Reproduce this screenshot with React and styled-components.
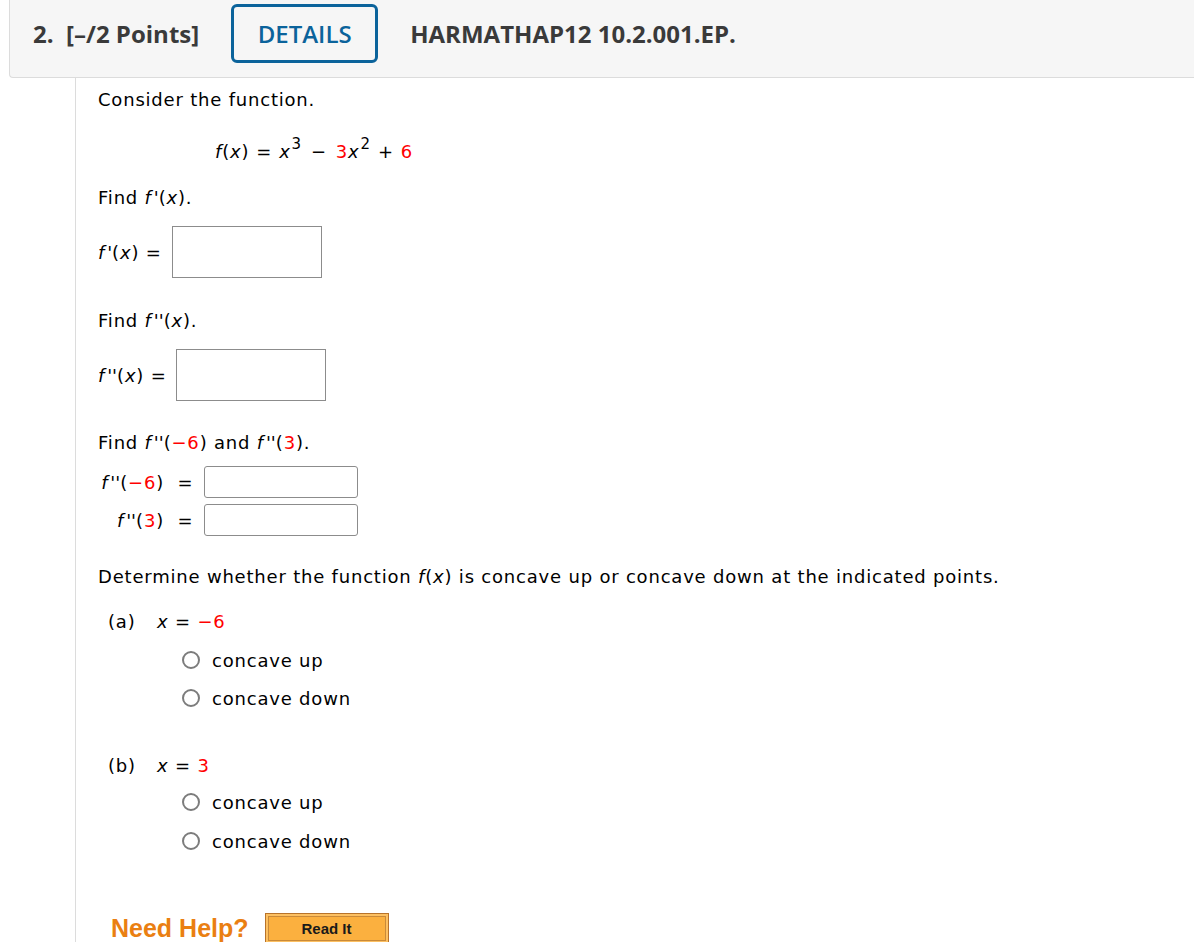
import styled, { createGlobalStyle } from 'styled-components';

/* ============ GLOBAL ============ */

const Global = createGlobalStyle`
  html, body {
    margin: 0;
    padding: 0;
    background: #ffffff;
  }
  body {
    font-family: "DejaVu Sans", Verdana, sans-serif;
    color: #000;
  }
`;

const BODY_FONT = `"DejaVu Sans", "Bitstream Vera Sans", Verdana, sans-serif`;

/* ============ STYLED ============ */

const Page = styled.div`
  padding-left: 9px;
  width: 1194px;
  height: 942px;
  box-sizing: border-box;
  overflow: hidden;
`;

const Header = styled.div`
  height: 78px;
  box-sizing: border-box;
  padding: 5px 0 15px 23px;
  display: flex;
  align-items: center;
  background: #f6f6f6;
  border-left: 1px solid #dcdcdc;
  border-bottom: 1px solid #dcdcdc;
  border-bottom-left-radius: 4px;
`;

const HeadText = styled.div`
  font-family: "Open Sans", "Liberation Sans", sans-serif;
  font-weight: 700;
  font-size: 24px;
  letter-spacing: 0;
  color: #3a3a3a;
  margin-left: ${({ $gap }) => $gap || 0}px;
  white-space: pre;
`;

const DetailsButton = styled.button`
  margin-left: 32px;
  width: 147px;
  height: 59px;
  box-sizing: border-box;
  border: 3px solid #0b639b;
  border-radius: 6px;
  background: transparent;
  color: #0b639b;
  font-family: "Open Sans", "Liberation Sans", sans-serif;
  font-weight: 600;
  font-size: 24px;
  padding: 0;
`;

const Content = styled.div`
  margin-left: 66px;
  border-left: 1px solid #dcdcdc;
  padding-left: 22px;
  padding-top: 10px;
  height: 900px;
  font-family: ${BODY_FONT};
  letter-spacing: 0.8px;
`;

const Line = styled.div`
  font-size: 18px;
  line-height: 24px;
  height: 24px;
  margin-top: ${({ $top }) => $top || 0}px;
  margin-left: ${({ $indent }) => $indent || 0}px;
  white-space: pre;
  display: flex;
  align-items: center;
`;

const I = styled.i`
  font-style: italic;
`;

const Prime = styled.i`
  font-style: italic;
  margin-left: 2px;
  letter-spacing: 0;
`;

const Red = styled.span`
  color: #ff0000;
`;

const Sup = styled.span`
  font-size: 15px;
  line-height: 0;
  position: relative;
  top: -8px;
  margin-left: 1px;
`;

const Op = styled.span`
  margin: 0 ${({ $m }) => ($m === undefined ? 7 : $m)}px;
`;

const AnswerRow = styled.div`
  display: flex;
  align-items: center;
  margin-top: ${({ $top }) => $top}px;
  font-size: 18px;
  white-space: pre;
`;

const BigInput = styled.input`
  width: 150px;
  height: 52px;
  box-sizing: border-box;
  border: 1px solid #8c8c8c;
  margin-left: ${({ $gap }) => $gap}px;
  background: #fff;
`;

const SmallGrid = styled.div`
  display: grid;
  grid-template-columns: 66px 40px 154px;
  grid-auto-rows: 32px;
  row-gap: 6px;
  align-items: center;
  margin-top: 11px;
  font-size: 18px;
  white-space: pre;
`;

const GridLabel = styled.div`
  justify-self: end;
`;

const GridEq = styled.div`
  text-align: center;
  padding-left: 3px;
`;

const SmallInput = styled.input`
  width: 154px;
  height: 32px;
  box-sizing: border-box;
  border: 1px solid #8c8c8c;
  border-radius: 3px;
  background: #fff;
`;

const PartLabel = styled.span`
  display: inline-block;
  width: 49px;
`;

const RadioRow = styled.label`
  display: flex;
  align-items: center;
  height: 24px;
  margin-top: ${({ $top }) => $top}px;
  margin-left: 84px;
  font-size: 18px;
`;

const RadioDot = styled.span`
  width: 18px;
  height: 18px;
  box-sizing: border-box;
  border: 2px solid #7c7c7c;
  border-radius: 50%;
  margin-right: 12px;
  background: #fff;
`;

const HelpRow = styled.div`
  display: flex;
  align-items: center;
  margin-top: 60px;
  margin-left: 13px;
  letter-spacing: 0;
`;

const NeedHelp = styled.span`
  font-family: "Liberation Sans", Arial, sans-serif;
  font-weight: 700;
  font-size: 25px;
  color: #ea7f12;
`;

const ReadIt = styled.button`
  margin-left: 16px;
  width: 124px;
  height: 31px;
  box-sizing: border-box;
  border: 1px solid #b8732a;
  background: #fbb03f;
  box-shadow: inset 0 0 0 2px #fcc062, inset 0 0 0 3px #c98a3a;
  font-family: "Liberation Sans", Arial, sans-serif;
  font-weight: 700;
  font-size: 15px;
  color: #1a1a1a;
  padding: 0;
`;

/* ============ COMPONENT ============ */

const Fx = ({ primes }) => (
  <>
    <I>f</I>
    <Prime>{primes}</Prime>(<I>x</I>)
  </>
);

const Radio = ({ children, top }) => (
  <RadioRow $top={top}>
    <RadioDot />
    {children}
  </RadioRow>
);

export default function App() {
  return (
    <Page>
      <Global />
      <Header>
        <HeadText>2.  [–/2 Points]</HeadText>
        <DetailsButton>DETAILS</DetailsButton>
        <HeadText $gap={32}>HARMATHAP12 10.2.001.EP.</HeadText>
      </Header>

      <Content>
        <Line>Consider the function.</Line>
        <Line $top={28} $indent={117}>
          <I>f</I>(<I>x</I>)<Op>=</Op>
          <I>x</I>
          <Sup>3</Sup>
          <Op $m={9}>−</Op>
          <Red>3</Red>
          <I>x</I>
          <Sup>2</Sup>
          <Op>+</Op>
          <Red>6</Red>
        </Line>

        <Line $top={22}>
          Find <Fx primes="'" />.
        </Line>
        <AnswerRow $top={16}>
          <Fx primes="'" /> =
          <BigInput $gap={10} />
        </AnswerRow>

        <Line $top={31}>
          Find <Fx primes="''" />.
        </Line>
        <AnswerRow $top={16}>
          <Fx primes="''" /> =
          <BigInput $gap={9} />
        </AnswerRow>

        <Line $top={30}>
          Find <I>f</I>
          <Prime>''</Prime>(<Red>−6</Red>) and <I>f</I>
          <Prime>''</Prime>(<Red>3</Red>).
        </Line>
        <SmallGrid>
          <GridLabel>
            <I>f</I>
            <Prime>''</Prime>(<Red>−6</Red>)
          </GridLabel>
          <GridEq>=</GridEq>
          <SmallInput />
          <GridLabel>
            <I>f</I>
            <Prime>''</Prime>(<Red>3</Red>)
          </GridLabel>
          <GridEq>=</GridEq>
          <SmallInput />
        </SmallGrid>

        <Line $top={29}>
          Determine whether the function <I>f</I>(<I>x</I>) is concave up or concave down at the indicated points.
        </Line>

        <Line $top={21} $indent={10}>
          <PartLabel>(a)</PartLabel>
          <I>x</I> = <Red>−6</Red>
        </Line>
        <Radio top={14}>concave up</Radio>
        <Radio top={14}>concave down</Radio>

        <Line $top={44} $indent={10}>
          <PartLabel>(b)</PartLabel>
          <I>x</I> = <Red>3</Red>
        </Line>
        <Radio top={12}>concave up</Radio>
        <Radio top={15}>concave down</Radio>

        <HelpRow>
          <NeedHelp>Need Help?</NeedHelp>
          <ReadIt>Read It</ReadIt>
        </HelpRow>
      </Content>
    </Page>
  );
}
